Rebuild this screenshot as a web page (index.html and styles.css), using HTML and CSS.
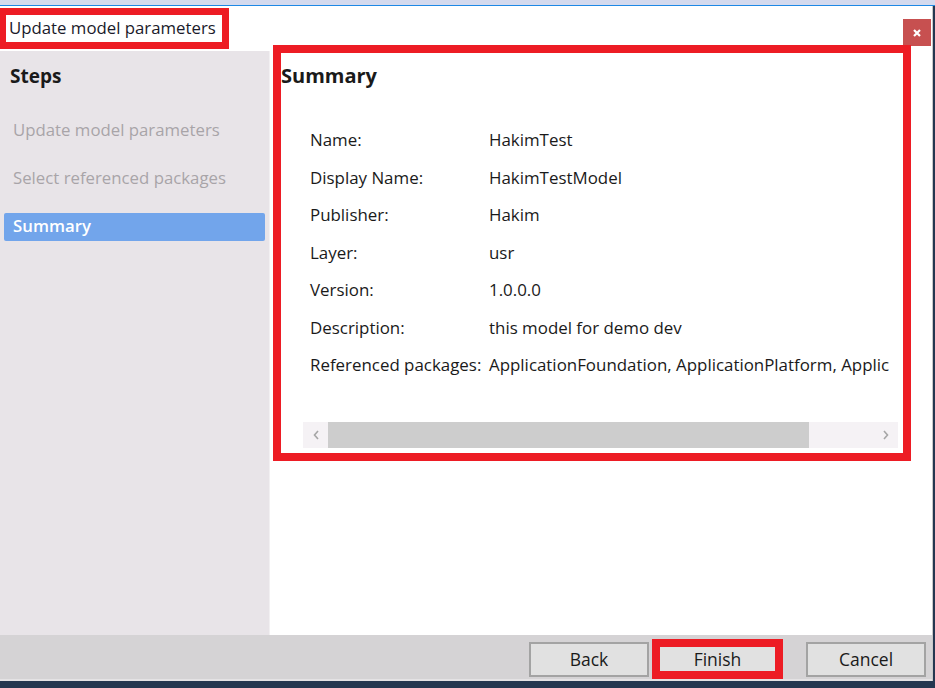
FILE: index.html
```html
<!DOCTYPE html>
<html lang="en">
<head>
    <meta charset="UTF-8">
    <title>Update model parameters</title>
    <link rel="stylesheet" href="styles.css">
</head>
<body>
    <div class="top-strip"></div>
    <div class="dialog">
        <!-- Title bar -->
        <div class="titlebar">
            <div class="title-box">Update model parameters</div>
            <button class="close-btn" aria-label="Close">
                <svg width="10" height="10" viewBox="0 0 10 10">
                    <path d="M2 2 L8 8 M8 2 L2 8" stroke="#fff" stroke-width="2.2"/>
                </svg>
            </button>
        </div>

        <div class="main">
            <!-- Steps list -->
            <div class="sidebar">
                <h2 class="steps-title">Steps</h2>
                <ul class="steps">
                    <li class="step">Update model parameters</li>
                    <li class="step">Select referenced packages</li>
                    <li class="step active">Summary</li>
                </ul>
            </div>

            <!-- Summary page -->
            <div class="content">
                <div class="summary-box">
                    <h2 class="summary-title">Summary</h2>
                    <div class="details">
                        <div class="label">Name:</div>
                        <div class="value">HakimTest</div>
                        <div class="label">Display Name:</div>
                        <div class="value">HakimTestModel</div>
                        <div class="label">Publisher:</div>
                        <div class="value">Hakim</div>
                        <div class="label">Layer:</div>
                        <div class="value">usr</div>
                        <div class="label">Version:</div>
                        <div class="value">1.0.0.0</div>
                        <div class="label">Description:</div>
                        <div class="value">this model for demo dev</div>
                        <div class="label">Referenced packages:</div>
                        <div class="value">ApplicationFoundation, ApplicationPlatform, Applic</div>
                    </div>
                    <div class="hscroll">
                        <span class="arrow">
                            <svg width="6" height="10" viewBox="0 0 6 10"><path d="M5 1 L1.5 5 L5 9" fill="none" stroke="#a6a6a6" stroke-width="1.6"/></svg>
                        </span>
                        <div class="track"><div class="thumb"></div></div>
                        <span class="arrow">
                            <svg width="6" height="10" viewBox="0 0 6 10"><path d="M1 1 L4.5 5 L1 9" fill="none" stroke="#a6a6a6" stroke-width="1.6"/></svg>
                        </span>
                    </div>
                </div>
            </div>
        </div>

        <!-- Buttons -->
        <div class="footer">
            <button class="btn">Back</button>
            <div class="finish-mark"><button class="btn btn-finish">Finish</button></div>
            <button class="btn">Cancel</button>
        </div>
    </div>
    <div class="bottom-strip"></div>
</body>
</html>
```

FILE: styles.css
```css
/* Reset */
* {
    margin: 0;
    padding: 0;
    box-sizing: border-box;
}

body {
    width: 935px;
    height: 688px;
    overflow: hidden;
    font-family: "Open Sans", "Noto Sans", sans-serif;
    background-color: #253750;
    color: #1a1a1a;
}

.top-strip {
    height: 6px;
    background-color: #d4daee;
    border-bottom: 1px solid #1e88e5;
}

.dialog {
    width: 933px;
    background-color: #fff;
    border-right: 1px solid #c8c8c8;
}

/* Title bar */
.titlebar {
    height: 45px;
    display: flex;
    justify-content: space-between;
    align-items: flex-start;
    padding-top: 2px;
}

.title-box {
    width: 229px;
    height: 41px;
    border: 7px solid #ed1c24;
    border-left-width: 6px;
    font-size: 16.8px;
    line-height: 26px;
    padding-left: 3px;
    color: #1a1a2a;
    white-space: nowrap;
}

.close-btn {
    width: 28px;
    height: 27px;
    margin-top: 11px;
    margin-right: 1px;
    border: none;
    background-color: #c75050;
    display: flex;
    align-items: center;
    justify-content: center;
}

/* Main area */
.main {
    display: flex;
    height: 584px;
}

.sidebar {
    width: 270px;
    background-color: #e8e4e8;
    border-right: 1px solid #f2f0f2;
    padding: 13px 4px 0 4px;
}

.steps-title {
    font-size: 19px;
    font-weight: 700;
    padding-left: 6px;
    line-height: 24px;
    margin-bottom: 29px;
}

.steps {
    list-style: none;
}

.step {
    height: 28px;
    line-height: 26px;
    padding-left: 9px;
    margin-bottom: 20px;
    font-size: 16.8px;
    color: #a8a4a8;
    border-radius: 2px;
    white-space: nowrap;
}

.step.active {
    background-color: #72a5eb;
    color: #fff;
    font-weight: 600;
    width: 261px;
}

.content {
    flex: 1;
    position: relative;
}

/* Highlighted summary page */
.summary-box {
    position: relative;
    z-index: 2;
    margin-top: -6px;
    margin-left: 3px;
    width: 638px;
    height: 416px;
    border: 8px solid #ed1c24;
    overflow: hidden;
}

.summary-title {
    font-size: 20px;
    font-weight: 700;
    line-height: 26px;
    margin-top: 10px;
}

.details {
    display: grid;
    grid-template-columns: 179px max-content;
    grid-auto-rows: 37.5px;
    align-items: center;
    margin-top: 32px;
    margin-left: 29px;
    font-size: 16.9px;
    white-space: nowrap;
}

.hscroll {
    display: flex;
    align-items: center;
    height: 26px;
    margin: 38px 5px 0 22px;
    background-color: #f5f2f5;
}

.arrow {
    width: 25px;
    display: flex;
    align-items: center;
    justify-content: center;
}

.track {
    flex: 1;
    height: 100%;
}

.thumb {
    width: 481px;
    height: 100%;
    background-color: #cdcdcd;
}

/* Footer */
.footer {
    height: 46px;
    background-color: #d5d3d5;
    border-bottom: 2px solid #e4e2e4;
    display: flex;
    align-items: center;
    justify-content: flex-end;
    padding: 4px 6px 0 0;
}

.btn {
    width: 120px;
    height: 35px;
    font-family: inherit;
    font-size: 17.5px;
    color: #1a1a1a;
    background-color: #e1e1e1;
    border: 2px solid #a3a3a3;
}

.finish-mark {
    width: 131px;
    height: 40px;
    border: 8px solid #ed1c24;
    margin: 0 23px 0 3px;
    display: flex;
}

.btn-finish {
    width: 100%;
    height: 100%;
    border: none;
}

.bottom-strip {
    height: 4px;
    background-color: #253750;
}
```
